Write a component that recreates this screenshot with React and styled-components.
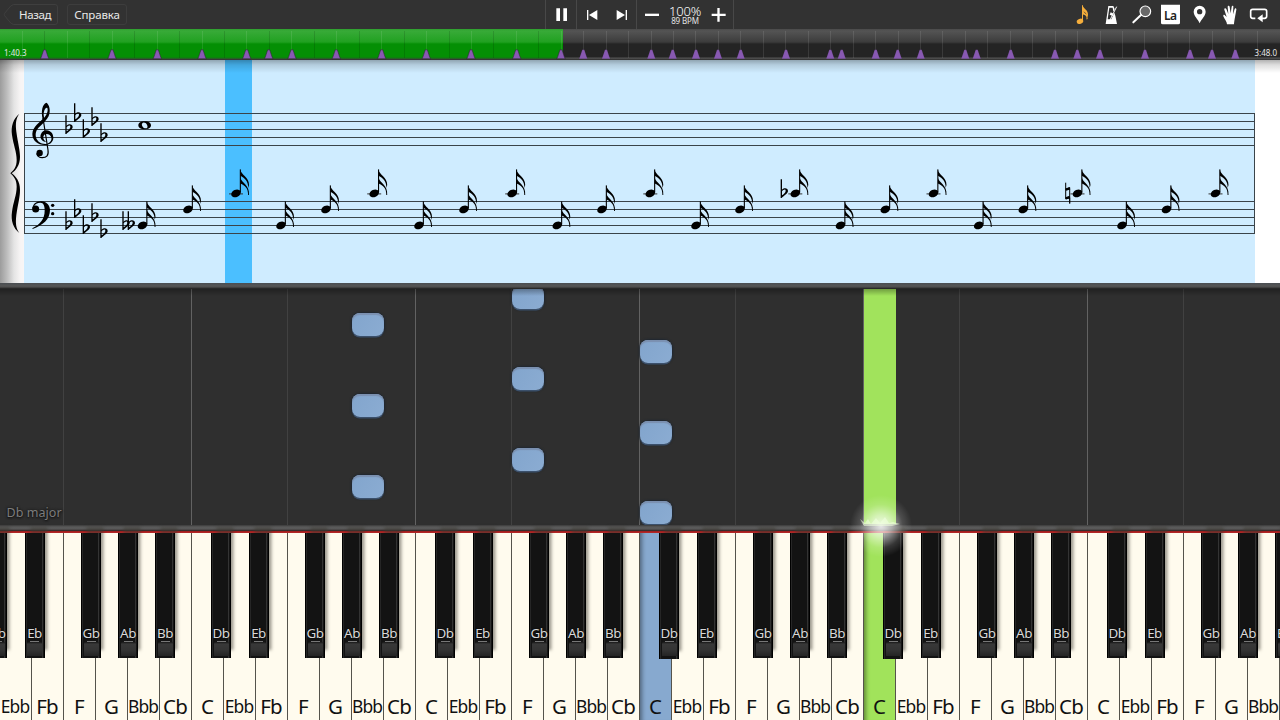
import React from "react";
import styled, { createGlobalStyle, css } from "styled-components";

const Global = createGlobalStyle`
  * { box-sizing: border-box; }
  body { margin: 0; background: #2f2f2f; overflow: hidden; }
`;

const FONT = '"Noto Sans", "Open Sans", sans-serif';

const Screen = styled.div`
  width: 1280px;
  height: 720px;
  display: flex;
  flex-direction: column;
  overflow: hidden;
  font-family: ${FONT};
`;

/* ---------- toolbar ---------- */

const Toolbar = styled.header`
  height: 29px;
  display: grid;
  grid-template-columns: 545px 189px 1fr;
  background: #323232;
  color: #fff;
`;

const MenuGroup = styled.div`
  display: flex;
  align-items: flex-start;
  gap: 9px;
  padding: 4px 0 0 3px;
`;

const BackButton = styled.button`
  position: relative;
  width: 55px;
  height: 21px;
  padding: 0 0 0 9px;
  border: 0;
  background: none;
  color: #e8e8e8;
  font: 11.5px/20px ${FONT};
  letter-spacing: -0.4px;
  white-space: nowrap;
`;

const BackOutline = styled.svg`
  position: absolute;
  inset: 0;
`;

const MenuButton = styled.button`
  width: 60px;
  height: 21px;
  padding: 0;
  border: 1px solid #3d3d3d;
  border-radius: 3px;
  background: none;
  color: #e8e8e8;
  font: 11.5px/18px ${FONT};
  letter-spacing: -0.15px;
`;

const Transport = styled.div`
  display: flex;
  height: 29px;
`;

const TransportGroup = styled.div`
  width: ${(p) => p.$width}px;
  display: flex;
  align-items: center;
  border-left: 1px solid #484848;
  ${(p) => p.$last && css`border-right: 1px solid #484848;`}
`;

const Tempo = styled.div`
  width: 46px;
  height: 29px;
  display: flex;
  flex-direction: column;
  align-items: center;
  padding-top: 4px;
`;

const TempoValue = styled.span`
  font-size: 13px;
  line-height: 14px;
  font-weight: 300;
  letter-spacing: -0.2px;
`;

const TempoBpm = styled.span`
  color: #e4e4e4;
  font-size: 8px;
  line-height: 6px;
  letter-spacing: -0.15px;
  white-space: nowrap;
`;

const Tools = styled.div`
  display: flex;
  justify-content: flex-end;
  padding-right: 6.67px;
`;

const IconSvg = styled.svg`
  display: block;
  flex: none;
  height: 29px;
`;

const Icon = ({ from, to, children }) => (
  <IconSvg width={(to - from) / 3} height="29" viewBox={`${from} 0 ${to - from} 87`} fill="#fff">
    {children}
  </IconSvg>
);

/* ---------- timeline ---------- */

const Timeline = styled.div`
  position: relative;
  height: 31px;
  flex: none;
  background: linear-gradient(#4a4a4a 0, #545454 2px, #3c3c3c 13px, #242424 15px, #242424 28px, #555 29px, #2c2c2c 31px);
`;

const Played = styled.div`
  width: 563px;
  height: 30px;
  background: linear-gradient(#2f9f2f 0, #38aa38 2px, #21a121 13px, #048f04 15px, #048f04 28px, #2d542d 30px);
`;

const Markers = styled.svg`
  position: absolute;
  inset: 0;
`;

const Time = styled.span`
  position: absolute;
  bottom: 2px;
  ${(p) => (p.$end ? "right: 3px" : "left: 4px")};
  color: #e6e6e6;
  font-size: 8px;
  line-height: 10px;
`;

const MARKS = [
  44.7, 112, 157.3, 202, 246.7, 268.7, 292, 336.3, 381.7, 426.3, 471, 516.7, 561, 583.3, 606,
  651.3, 672.7, 696, 718, 740.7, 786, 830.3, 841.7, 875.7, 897.7, 920.7, 965.3, 976.7, 1010.7,
  1055, 1077.3, 1100, 1145, 1190, 1212, 1235.3,
];

/* ---------- score ---------- */

const Score = styled.section`
  position: relative;
  height: 223px;
  flex: none;
  display: flex;
  background: #fff;
`;

const PageEdge = styled.div`
  width: 24px;
  background: linear-gradient(90deg, #9c9c9c, #bdbdbd 7px, #e4e4e4 14px, #f6f4f4 20px, #f8f6f6);
`;

const Page = styled.div`
  width: 1231px;
  padding-left: 200.7px;
  background: #cfecff;
`;

const Cursor = styled.div`
  width: 27.7px;
  height: 100%;
  background: #4bbfff;
`;

const Notation = styled.svg`
  position: absolute;
  inset: 0;
`;

const TopShade = styled.div`
  position: absolute;
  top: 0;
  left: 0;
  width: 100%;
  height: 13px;
  background: linear-gradient(rgba(0, 0, 0, 0.3), rgba(0, 0, 0, 0.13) 5px, rgba(0, 0, 0, 0));
`;

const Divider = styled.div`
  height: 6px;
  flex: none;
  background: linear-gradient(${(p) => p.$stops});
`;

const Flat = ({ x, y }) => (
  <path
    transform={`translate(${x} ${y})`}
    fillRule="evenodd"
    d="M-2 0H2V31C9 24 20 26 20 35C20 43 8 48 1 56H-2ZM2 36V48C9 43 13 39 13 34C13 28 6 30 2 36Z"
  />
);

const Sixteenth = ({ x, y, ledger }) => (
  <g transform={`translate(${x} ${y})`}>
    {ledger && <rect x="-7" y="0" width="14" height="1" fill="#333" />}
    <ellipse rx="5" ry="3.6" transform="rotate(-24)" />
    <rect x="3.8" y="-24" width="1.1" height="23" />
    <path d="M4.4 -24C4.8 -18.5 13.2 -16.5 13 -8.5L12.2 -5.5C12.2 -12 9 -15 4.4 -17.6Z" />
    <path d="M4.4 -15.6C5.5 -10.5 13.8 -8.5 13 1.6H12.1C12.2 -5.5 9 -8 4.4 -10Z" />
  </g>
);

const LOW = [142.5, 281, 419, 557.3, 696, 840.5, 978.7, 1122];
const MID = [188, 326, 464, 602, 740, 885.3, 1023.3, 1166.5];
const HIGH = [236, 374.2, 512.2, 650.3, 795.3, 933.5, 1077.5, 1215.5];
const FLATS = [[198, 76], [224, 40], [250, 88], [276, 52], [303, 100]];

function Music() {
  return (
    <Notation width="1280" height="223" viewBox="0 60 1280 223">
      {[113, 121, 129, 137, 145, 201, 209, 217, 225, 233].map((y) => (
        <rect key={y} x="24" y={y} width="1231" height="1" fill="#3a444a" />
      ))}
      <rect x="24" y="113" width="1" height="121" fill="#3a444a" />
      <rect x="1254" y="113" width="1" height="121" fill="#3a444a" />
      <g transform="translate(0 90) scale(0.33333)">
        <path d="M58 71C48 84 46 100 49 125C54 160 60 180 60 200C60 226 48 240 35 250C48 260 60 274 60 300C60 322 54 340 49 375C46 400 48 416 58 429C40 414 32 392 36 365C40 335 50 315 50 290C50 270 42 260 31 250C42 240 50 230 50 210C50 185 40 165 36 135C32 108 40 86 58 71Z" />
        <path d="M128 88C122 62 128 42 139 38C148 44 151 58 148 72C143 92 122 104 112 118C104 130 106 146 116 155C124 161 134 163 142 161C152 158 156 150 154 142C151 134 144 131 138 132C130 134 128 142 132 149C134 152 136 154 139 156C126 155 119 144 122 134C125 125 132 121 140 121C152 122 160 131 160 143C160 157 148 165 134 165C114 165 97 152 97 132C98 110 118 98 131 85C141 74 145 62 142 54C138 50 131 60 131 74L133 88Z" />
        <path d="M129 84L144 180C147 198 138 203 127 203C118 203 112 198 110 190" fill="none" stroke="#000" strokeWidth="3.6" />
        <circle cx="119" cy="189" r="9.5" />
        <path d="M97 358C97 342 110 333 124 334C140 335 150 346 150 360C150 388 128 406 98 417L97 415C120 403 134 388 134 362C134 348 131 338 121 338C112 338 104 342 102 350Z" />
        <circle cx="107" cy="357" r="10.5" />
        <circle cx="158" cy="346" r="5" />
        <circle cx="158" cy="371" r="5" />
        {FLATS.map(([x, y]) => <Flat key={x} x={x} y={y} />)}
        {FLATS.map(([x, y]) => <Flat key={x} x={x} y={y + 288} />)}
        <Flat x={369} y={364} />
        <Flat x={385} y={364} />
        <Flat x={2344} y={268} />
        <path fillRule="evenodd" d="M415 106C415 98 424 94 434 94C444 94 453 98 453 106C453 114 444 118 434 118C424 118 415 114 415 106ZM426 101C424 106 430 115 437 115C443 115 444 110 441 104C437 97 429 96 426 101Z" />
      </g>
      <path d="M1065.7 182.7V199L1069.7 198V203.5M1069.7 203.5V187.5L1065.7 189" fill="none" stroke="#000" strokeWidth="1" />
      <path d="M1065.7 189.8L1069.9 188.4M1065.7 198.3L1069.9 196.9" stroke="#000" strokeWidth="2.2" />
      {LOW.map((x) => <Sixteenth key={x} x={x} y={225.4} />)}
      {MID.map((x) => <Sixteenth key={x} x={x} y={209.4} />)}
      {HIGH.map((x) => <Sixteenth key={x} x={x} y={193.4} ledger />)}
    </Notation>
  );
}

/* ---------- falling notes ---------- */

const Roll = styled.section`
  position: relative;
  height: 236px;
  flex: none;
  display: flex;
  overflow: hidden;
  background: #2f2f2f;
`;

const Lane = styled.div`
  width: ${(p) => p.$width}px;
  flex: none;
  border-right: 1px solid ${(p) => (p.$octave ? "#626262" : "#414141")};
`;

const NoteBlock = styled.div`
  position: absolute;
  left: ${(p) => p.$x}px;
  top: ${(p) => p.$y - 289}px;
  width: 31.5px;
  height: 23px;
  border-radius: 8px;
  background: linear-gradient(120deg, #82a5cd, #8bacd2);
  box-shadow: inset 0 2px 1px #7b90b0, 0 1.5px 0 #3b506b, 0 0 2px 1px #1f2731;
`;

const HeldNote = styled.div`
  position: absolute;
  left: 864px;
  top: 0;
  width: 31.5px;
  height: 235px;
  background: #a1e35c;
`;

const RollShade = styled(TopShade)`
  height: 7px;
  background: linear-gradient(rgba(0, 0, 0, 0.3), rgba(0, 0, 0, 0));
`;

const KeySignature = styled.div`
  position: absolute;
  left: 6.5px;
  bottom: 2px;
  color: #7c7c7c;
  font-size: 12.5px;
  line-height: 20px;
  letter-spacing: 0.05px;
  text-shadow: 0 0 3px #111, 0 1px 2px #111;
`;

const NOTES = [
  [512, 286], [352, 313], [640, 340], [512, 367], [352, 394],
  [640, 421], [512, 448], [352, 474.5], [640, 501],
];

/* ---------- keyboard ---------- */

const Felt = styled.div`
  height: 2px;
  flex: none;
  background: linear-gradient(#9a1b1b, #b92b2b);
`;

const Keyboard = styled.section`
  position: relative;
  height: 187px;
  flex: none;
  display: flex;
`;

const HELD = { blue: "#87a9cf", green: "#a1e35b" };

const WhiteKey = styled.div`
  width: 32px;
  flex: none;
  display: flex;
  align-items: flex-end;
  justify-content: center;
  padding: 0 1px 1px 0;
  border-right: 1px solid #55534c;
  background: ${(p) => HELD[p.$held] || "#fffbee"};
  ${(p) => p.$held && css`
    box-shadow: inset 6px 0 4px -4px rgba(0, 0, 0, 0.4);
  `}
  color: #111;
  font-size: ${(p) => (p.$long ? 17.4 : 20.5)}px;
  line-height: 26px;
  letter-spacing: ${(p) => (p.$long ? -0.9 : -0.8)}px;
  white-space: nowrap;
`;

const BlackKey = styled.div`
  position: absolute;
  top: 0;
  left: ${(p) => p.$x}px;
  width: 20px;
  height: ${(p) => (p.$low ? 126 : 124.5)}px;
  display: flex;
  flex-direction: column;
  align-items: center;
  justify-content: flex-end;
  padding-bottom: ${(p) => (p.$low ? 3.5 : 2)}px;
  background: linear-gradient(90deg, #000 0 1px, #262626 1.5px, #131313 2.5px 17px, #333 17.5px 18.2px, #000 18.7px);
  box-shadow: 3.5px -7px 3px -1px rgba(60, 58, 50, 0.5);
`;

const BlackLabel = styled.span`
  color: #d8d8d8;
  font-size: 13.4px;
  line-height: 15px;
  letter-spacing: -0.5px;
  white-space: nowrap;
  text-shadow: 0 0 2px #000;
`;

const KeyLip = styled.div`
  width: 15px;
  height: 15px;
  border-radius: 3px 3px 0 0;
  background:
    linear-gradient(#777, #777) 50% 0 / 9px 1px no-repeat,
    linear-gradient(#161616 0 1px, #383838 3px, #333 9px, #242424);
`;

const Glow = styled.div`
  position: absolute;
  left: 850px;
  top: -38px;
  width: 62px;
  height: 62px;
  background: radial-gradient(closest-side, rgba(255, 255, 255, 0.85), rgba(255, 255, 255, 0.55) 35%, rgba(255, 255, 255, 0.15) 70%, rgba(255, 255, 255, 0));
`;

const Spark = styled.svg`
  position: absolute;
  left: 858px;
  top: -19px;
`;

const SCALE = ["Ebb", "Fb", "F", "G", "Bbb", "Cb", "C"];
const BLACKS = [["Db", -13], ["Eb", 24.5], ["Gb", 81], ["Ab", 118], ["Bb", 155]];

export default function App() {
  const whites = Array.from({ length: 40 }, (_, i) => SCALE[i % 7]);
  const blacks = Array.from({ length: 6 }, (_, o) =>
    BLACKS.map(([name, x]) => ({ name, x: x + o * 224 }))
  ).flat().filter((k) => k.x < 1280);

  return (
    <Screen>
      <Global />
      <Toolbar>
        <MenuGroup>
          <BackButton>
            <BackOutline width="55" height="21" viewBox="0 0 55 21" fill="none" stroke="#3f3f3f">
              <path d="M10.5 .5H52Q54.5 .5 54.5 3V18Q54.5 20.5 52 20.5H10.5Q8 20 6 17L1.5 11.5Q1 10.5 1.5 9.5L6 4Q8 1 10.5 .5Z" />
            </BackOutline>
            Назад
          </BackButton>
          <MenuButton>Справка</MenuButton>
        </MenuGroup>
        <Transport>
          <TransportGroup $width={31}>
            <Icon from={78} to={168}>
              <path d="M109 25H120V63H109ZM130 25H141V63H130Z" />
            </Icon>
          </TransportGroup>
          <TransportGroup $width={60}>
            <Icon from={171} to={260}>
              <path d="M201 30H205V60H201ZM232 30V60L207 45Z" />
            </Icon>
            <Icon from={260} to={348}>
              <path d="M316 30H320V60H316ZM289 30V60L314 45Z" />
            </Icon>
          </TransportGroup>
          <TransportGroup $width={98} $last>
            <Icon from={351} to={426}>
              <path d="M375 41H417V48H375Z" />
            </Icon>
            <Tempo>
              <TempoValue>100%</TempoValue>
              <TempoBpm>89 BPM</TempoBpm>
            </Tempo>
            <Icon from={564} to={636}>
              <path d="M575 41H592V24H599V41H617V48H599V65H592V48H575Z" />
            </Icon>
          </TransportGroup>
        </Transport>
        <Tools>
          <Icon from={84} to={172}>
            <g fill="#f5ae3c">
              <ellipse cx="120" cy="64" rx="10" ry="7.5" transform="rotate(-20 120 64)" />
              <path d="M126 16H129V64H126Z" />
              <path d="M128 16C130 27 144 29 144 43C144 49 142 54 139 57C142 45 140 38 128 33ZM128 31C131 40 144 41 143 56L140 59C141 50 138 46 128 43Z" />
            </g>
          </Icon>
          <Icon from={172} to={260}>
            <path fillRule="evenodd" d="M206 18H221L225 28L221 35L219 23H209L204 58H215L224 38L227 47L232 72H198Z" />
            <path d="M211 60L231 20" stroke="#fff" strokeWidth="3" />
            <path d="M213 37L222 41L219 48L210 44Z" />
          </Icon>
          <Icon from={260} to={348}>
            <circle cx="315" cy="34" r="16" fill="#686868" stroke="#fff" strokeWidth="3.5" />
            <path d="M302 45L279 67" stroke="#fff" strokeWidth="6" strokeLinecap="round" />
          </Icon>
          <Icon from={348} to={436}>
            <path d="M363 14H420V68Q420 73 415 73H368Q363 73 363 68Z" />
            <text x="391" y="60" textAnchor="middle" fill="#222" fontFamily="Noto Sans" fontWeight="600" fontSize="36" letterSpacing="-1">La</text>
          </Icon>
          <Icon from={436} to={524}>
            <path fillRule="evenodd" d="M480 70C475 57 462 48 462 35A18 18 0 0 1 498 35C498 48 485 57 480 70ZM480 27A8 8 0 1 0 480 43A8 8 0 1 0 480 27Z" />
          </Icon>
          <Icon from={524} to={612}>
            <path d="M560 73C560 64 552 58 549 49C548 44 552 43 555 47L559 51L552 29C551 24 556 23 558 27L564 42L562 21C562 16 567 16 568 20L571 40L574 20C575 16 580 17 579 21L578 43L583 27C584 23 589 24 588 29L583 57C582 64 581 68 581 73Z" />
          </Icon>
          <Icon from={612} to={700}>
            <path d="M646 55H638Q632 55 632 49V34Q632 28 638 28H674Q680 28 680 34V49Q680 55 674 55H664" fill="none" stroke="#fff" strokeWidth="5" />
            <path d="M668 43V67L652 55Z" />
          </Icon>
        </Tools>
      </Toolbar>

      <Timeline>
        <Played />
        <Markers width="1280" height="31">
          {Array.from({ length: 56 }, (_, i) => {
            const x = Math.round(22.45 * (i + 1) - 0.5);
            const dark = i % 2 && x < 563;
            return (
              <rect key={i} x={x} y="2" width="1" height="27"
                fill={dark ? "#000" : "#fff"} opacity={dark ? 0.13 : 0.1} />
            );
          })}
          {MARKS.map((x) => (
            <path key={x} transform={`translate(${x} 0)`} d="M-4.2 29.8C-3 27.5 -2.2 24 -1 20.8H1C2.2 24 3 27.5 4.2 29.8Z"
              fill="#8859b2" stroke="#2c2430" strokeOpacity={x < 563 ? 0.7 : 0.15} strokeWidth="0.8" />
          ))}
        </Markers>
        <Time>1:40.3</Time>
        <Time $end>3:48.0</Time>
      </Timeline>

      <Score>
        <PageEdge />
        <Page><Cursor /></Page>
        <Music />
        <TopShade />
      </Score>
      <Divider $stops="#4a4e52, #555 3px, #4c4c4c 4px, #1c1c1c" />

      <Roll>
        {[64, 128, 96, 128, 96, 128, 96, 128, 96, 128, 96].map((w, i) => (
          <Lane key={i} $width={w} $octave={i % 2 === 1} />
        ))}
        {NOTES.map(([x, y]) => <NoteBlock key={`${x}-${y}`} $x={x} $y={y} />)}
        <HeldNote />
        <RollShade />
        <KeySignature>Db major</KeySignature>
      </Roll>
      <Divider $stops="#3a3a3a, #5a5a5a 2px, #585858 4px, #2b2020" />
      <Felt />

      <Keyboard>
        {whites.map((name, i) => (
          <WhiteKey key={i} $long={name.length === 3} $held={i === 20 ? "blue" : i === 27 ? "green" : undefined}>
            {name}
          </WhiteKey>
        ))}
        {blacks.map(({ name, x }) => (
          <BlackKey key={x} $x={x} $low={x === 659 || x === 883}>
            <BlackLabel>{name}</BlackLabel>
            <KeyLip />
          </BlackKey>
        ))}
        <Glow />
        <Spark width="44" height="12" viewBox="0 0 44 12">
          <path d="M2 5L7 9L10 5L13 10L18 4L22 9L27 3L31 9L35 8L42 10L34 12H6Z" fill="#f0ffe0" opacity=".6" />
        </Spark>
      </Keyboard>
    </Screen>
  );
}
